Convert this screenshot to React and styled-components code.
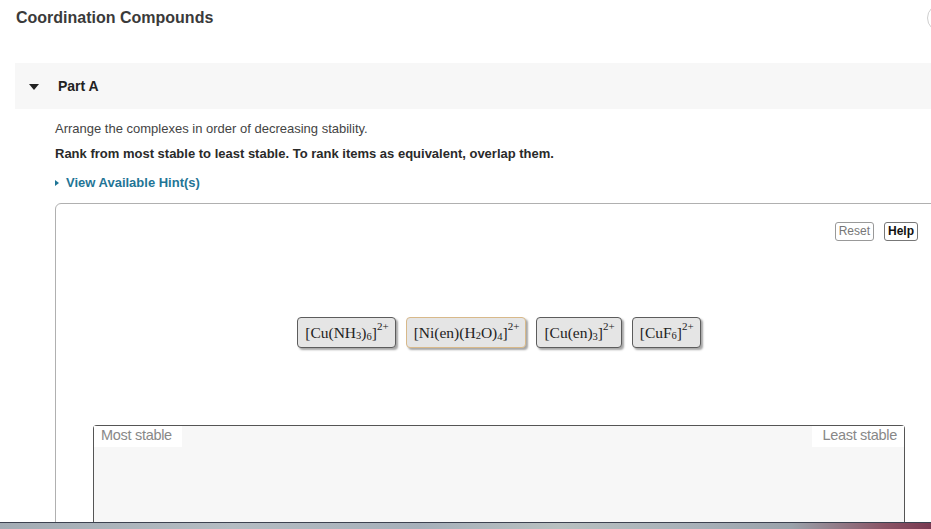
import React from "react";
import styled, { createGlobalStyle } from "styled-components";

const Global = createGlobalStyle`
  html, body { margin: 0; padding: 0; background: #fff; }
  body { font-family: "Liberation Sans", Arial, sans-serif; color: #333; overflow: hidden; }
  #root { width: 931px; height: 529px; overflow: hidden; position: relative; }
`;

const Page = styled.div`
  width: 931px;
  overflow: hidden;
`;

const Header = styled.header`
  display: flex;
  align-items: center;
  justify-content: space-between;
  height: 35px;
  padding-left: 16px;
`;

const Title = styled.h1`
  margin: 0;
  font-size: 16px;
  font-weight: bold;
  color: #3a3a3a;
`;

const RoundButton = styled.div`
  width: 26px;
  height: 26px;
  border-radius: 50%;
  border: 1px solid #cfcfcf;
  margin-right: -24px;
  flex: none;
`;

const PartBar = styled.div`
  margin-top: 28px;
  margin-left: 15px;
  height: 46px;
  background: #f7f7f7;
  display: flex;
  align-items: center;
  padding-left: 14px;
`;

const Caret = styled.span`
  width: 0;
  height: 0;
  border-left: 5px solid transparent;
  border-right: 5px solid transparent;
  border-top: 6px solid #222;
  margin-right: 19px;
  margin-top: 1px;
`;

const PartTitle = styled.span`
  font-size: 14px;
  font-weight: bold;
  color: #222;
`;

const PartBody = styled.div`
  padding-left: 55px;
  padding-top: 11px;
`;

const Instruction = styled.p`
  margin: 0;
  font-size: 13px;
  line-height: 17px;
  color: #444;
  font-weight: ${(p) => (p.$bold ? "bold" : "normal")};
  ${(p) => (p.$bold ? "color: #2a2a2a; margin-top: 8px;" : "")}
`;

const HintLink = styled.a`
  display: flex;
  align-items: center;
  margin-top: 12px;
  font-size: 13px;
  font-weight: bold;
  color: #1f7596;
  text-decoration: none;
  line-height: 17px;
`;

const HintCaret = styled.span`
  width: 0;
  height: 0;
  border-top: 3.5px solid transparent;
  border-bottom: 3.5px solid transparent;
  border-left: 4px solid #1f7596;
  margin-right: 7px;
`;

const Panel = styled.div`
  margin-top: 12px;
  width: 888px;
  height: 360px;
  border: 1px solid #b0b0b0;
  border-radius: 6px 6px 0 0;
  box-sizing: border-box;
  display: flex;
  flex-direction: column;
`;

const Toolbar = styled.div`
  display: flex;
  justify-content: flex-end;
  gap: 10px;
  padding: 18px 24px 0 0;
`;

const ToolButton = styled.button`
  height: 19px;
  padding: 0 3px;
  background: #fff;
  border: 1px solid ${(p) => (p.$primary ? "#777" : "#999")};
  border-radius: 3px;
  font-family: "Liberation Sans", Arial, sans-serif;
  font-size: 12px;
  font-weight: ${(p) => (p.$primary ? "bold" : "normal")};
  color: ${(p) => (p.$primary ? "#111" : "#777")};
  line-height: 17px;
`;

const ChipRow = styled.div`
  display: flex;
  justify-content: center;
  gap: 10px;
  margin-top: 76px;
`;

const Chip = styled.div`
  height: 31px;
  box-sizing: border-box;
  padding: 0 6px 0 7px;
  display: flex;
  align-items: center;
  background: #e5e5e5;
  border: 1.5px solid ${(p) => (p.$active ? "#d8b98a" : "#5c5c5c")};
  border-radius: 4px;
  box-shadow: 2px 2px 2px rgba(0, 0, 0, 0.35);
  font-family: "Liberation Serif", "Times New Roman", serif;
  font-size: 15.5px;
  color: #222;
  white-space: nowrap;
`;

const Sub = styled.span`
  font-size: 10.5px;
  position: relative;
  top: ${(p) => p.$drop || 4}px;
`;

const Sup = styled.span`
  font-size: 11px;
  position: relative;
  top: -7px;
`;

const RankBox = styled.div`
  margin: 77px 37px 0 37px;
  flex: 1;
  border: 1.5px solid #555;
  border-bottom: none;
  border-radius: 4px 4px 0 0;
  background: #f7f7f7;
  display: flex;
  justify-content: space-between;
  align-items: flex-start;
`;

const RankLabel = styled.span`
  background: #fff;
  font-size: 14.5px;
  color: #888;
  padding: 2px ${(p) => (p.$end ? "7px" : "10px")} 4px ${(p) => (p.$end ? "10px" : "7px")};
  line-height: 15px;
  letter-spacing: -0.3px;
`;

const TaskStrip = styled.div`
  position: fixed;
  left: 0;
  right: 0;
  bottom: 0;
  height: 6px;
  border-top: 1px solid #3c4250;
  background: linear-gradient(
    90deg,
    #a3acb4 0%,
    #b4bcc2 25%,
    #a6b0ba 45%,
    #b8c0c0 60%,
    #a7b0b8 75%,
    #9aa2aa 85%,
    #8a5466 95%,
    #7a3a52 100%
  );
`;

export default function App() {
  return (
    <Page>
      <Global />
      <Header>
        <Title>Coordination Compounds</Title>
        <RoundButton />
      </Header>
      <PartBar>
        <Caret />
        <PartTitle>Part A</PartTitle>
      </PartBar>
      <PartBody>
        <Instruction>Arrange the complexes in order of decreasing stability.</Instruction>
        <Instruction $bold>
          Rank from most stable to least stable. To rank items as equivalent, overlap them.
        </Instruction>
        <HintLink href="#">
          <HintCaret />
          View Available Hint(s)
        </HintLink>
        <Panel>
          <Toolbar>
            <ToolButton>Reset</ToolButton>
            <ToolButton $primary>Help</ToolButton>
          </Toolbar>
          <ChipRow>
            <Chip>
              [Cu(NH<Sub $drop={3}>3</Sub>)<Sub>6</Sub>]<Sup>2+</Sup>
            </Chip>
            <Chip $active>
              [Ni(en)(H<Sub $drop={3}>2</Sub>O)<Sub>4</Sub>]<Sup>2+</Sup>
            </Chip>
            <Chip>
              [Cu(en)<Sub>3</Sub>]<Sup>2+</Sup>
            </Chip>
            <Chip>
              [CuF<Sub $drop={3}>6</Sub>]<Sup>2+</Sup>
            </Chip>
          </ChipRow>
          <RankBox>
            <RankLabel>Most stable</RankLabel>
            <RankLabel $end>Least stable</RankLabel>
          </RankBox>
        </Panel>
      </PartBody>
      <TaskStrip />
    </Page>
  );
}
